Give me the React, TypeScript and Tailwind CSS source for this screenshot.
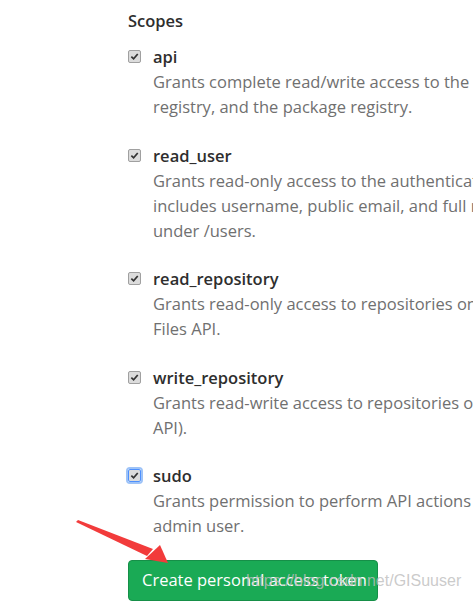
import React from "react";

const scopes = [
  {
    name: "api",
    lines: ["Grants complete read/write access to the API, including all groups and projects, the container", "registry, and the package registry."],
  },
  {
    name: "read_user",
    lines: [
      "Grants read-only access to the authenticated user's profile through the /user API endpoint, which",
      "includes username, public email, and full name. Also grants access to read-only API endpoints",
      "under /users.",
    ],
  },
  {
    name: "read_repository",
    lines: ["Grants read-only access to repositories on private projects using Git-over-HTTP or the Repository", "Files API."],
  },
  {
    name: "write_repository",
    lines: ["Grants read-write access to repositories on private projects using Git-over-HTTP (not using the", "API)."],
  },
  {
    name: "sudo",
    lines: ["Grants permission to perform API actions as any user in the system, when authenticated as an", "admin user."],
    focused: true,
  },
];

const CheckBox = ({ focused }: { focused?: boolean }) => (
  <span
    className={
      "relative mt-[6px] flex size-[13px] shrink-0 items-center justify-center rounded-[2px] border bg-[#dcdcdc] " +
      (focused ? "border-[#4d90fe] outline outline-2 outline-[#9ec3f7]" : "border-[#a0a0a0]")
    }
  >
    <svg viewBox="0 0 10 10" className="size-[9px]">
      <path d="M1.5 5.2 L4 7.6 L8.6 2.2" fill="none" stroke="#333" strokeWidth="1.9" />
    </svg>
  </span>
);

export default function App() {
  return (
    <div
      className="relative h-[602px] w-[473px] overflow-hidden bg-white pl-[128px] pt-[8px]"
      style={{ fontFamily: '"Open Sans", "Noto Sans", sans-serif' }}
    >
      <h2 className="text-[16.5px] font-semibold leading-[25px] text-[#2e2e2e]">Scopes</h2>

      <ul className="mt-[11px] flex flex-col gap-[23.5px]">
        {scopes.map((s) => (
          <li key={s.name} className="flex gap-[12px]">
            <CheckBox focused={s.focused} />
            <div className="whitespace-nowrap text-[16.5px] leading-[25px]">
              <div className="font-semibold text-[#2e2e2e]">{s.name}</div>
              {s.lines.map((l, i) => (
                <div key={i} className="text-[#707070]">
                  {l}
                </div>
              ))}
            </div>
          </li>
        ))}
      </ul>

      <button className="mt-[22px] h-[41px] w-[250px] rounded-[4px] border border-[#168f48] bg-[#1aaa55] pl-[13px] text-left text-[16.5px] text-white">
        Create personal access token
      </button>

      {/* blog watermark */}
      <span
        className="pointer-events-none absolute left-[246px] top-[570px] whitespace-nowrap text-[16px] leading-[22px] text-[#bdbdbd]/80"
        style={{ fontFamily: '"Liberation Sans", Arial, sans-serif' }}
      >
        https://blog.csdn.net/GISuuser
      </span>

      {/* red annotation arrow */}
      <svg className="pointer-events-none absolute left-0 top-0" width="473" height="602">
        <polygon points="76,522 78,520 153,549 147,556" fill="#f23b3b" />
        <polygon points="145,559 160,545 168,563" fill="#f23b3b" />
      </svg>
    </div>
  );
}
